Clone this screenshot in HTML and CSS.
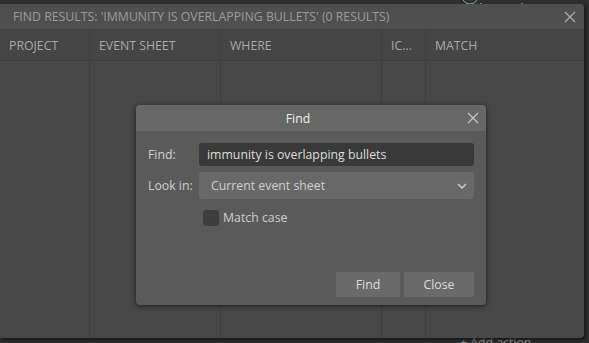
FILE: index.html
```html
<!DOCTYPE html>
<html lang="en">
<head>
    <meta charset="UTF-8">
    <title>Find results</title>
    <link rel="stylesheet" href="styles.css">
</head>
<body>

    <div class="backdrop">
        <svg class="bg-bits" width="120" height="6" viewBox="0 0 120 6">
            <circle cx="10" cy="-4" r="8" fill="none" stroke="#8fa88f" stroke-width="1"/>
            <rect x="20" y="3" width="2" height="2" fill="#2b9bc0"/>
            <rect x="61" y="3" width="2" height="2" fill="#2b9bc0"/>
        </svg>
        <div class="add-action">+ Add action</div>
    </div>

    <div class="results">
        <div class="results-title">
            <span>FIND RESULTS: 'IMMUNITY IS OVERLAPPING BULLETS' (0 RESULTS)</span>
            <svg class="close-x" width="12" height="12" viewBox="0 0 12 12"><path d="M1 1 L11 11 M11 1 L1 11" stroke="#a8a8a8" stroke-width="1.4"/></svg>
        </div>
        <div class="grid">
            <div class="col"><div class="head">PROJECT</div></div>
            <div class="col"><div class="head">EVENT SHEET</div></div>
            <div class="col"><div class="head">WHERE</div></div>
            <div class="col"><div class="head">IC...</div></div>
            <div class="col"><div class="head">MATCH</div></div>
        </div>
    </div>

    <div class="dialog">
        <div class="dialog-title">
            <span>Find</span>
            <svg class="dialog-x" width="12" height="12" viewBox="0 0 12 12"><path d="M1 1 L11 11 M11 1 L1 11" stroke="#c4c4c4" stroke-width="1.4"/></svg>
        </div>
        <div class="dialog-body">
            <div class="row">
                <label>Find:</label>
                <div class="input">immunity is overlapping bullets</div>
            </div>
            <div class="row">
                <label>Look in:</label>
                <div class="select">
                    <span>Current event sheet</span>
                    <svg width="10" height="6" viewBox="0 0 10 6"><path d="M1 1 L5 5 L9 1" fill="none" stroke="#cfcfcf" stroke-width="1.5"/></svg>
                </div>
            </div>
            <div class="check-row">
                <span class="box"></span>
                <span>Match case</span>
            </div>
            <div class="buttons">
                <button class="btn find">Find</button>
                <button class="btn close">Close</button>
            </div>
        </div>
    </div>

</body>
</html>
```

FILE: styles.css
```css
* { margin: 0; padding: 0; box-sizing: border-box; }

body {
    font-family: "Open Sans", "Noto Sans", sans-serif;
    font-size: 12.3px;
    width: 589px;
    height: 343px;
    background: #2e2e2e;
    overflow: hidden;
    position: relative;
    padding-top: 4px;
}

.backdrop .bg-bits {
    position: absolute;
    left: 460px;
    top: 0;
}

.add-action {
    position: absolute;
    left: 460px;
    top: 334px;
    color: #8a8a8a;
}

.results {
    position: relative;
    width: 584px;
    height: 334px;
    background: #474747;
    border-radius: 0 4px 4px 0;
    box-shadow: 2px 2px 3px rgba(0, 0, 0, 0.5);
    display: flex;
    flex-direction: column;
    overflow: hidden;
}

.results-title {
    height: 26px;
    background: #4f4f4f;
    display: flex;
    align-items: center;
    justify-content: space-between;
    padding: 0 8px 0 13px;
    color: #9c9c9c;
    border-bottom: 1px solid #414141;
}

.grid {
    flex: 1;
    display: grid;
    grid-template-columns: 90px 131px 161px 44px 1fr;
}

.col {
    border-right: 1px solid #3e3e3e;
}

.col:last-child { border-right: none; }

.head {
    height: 31px;
    display: flex;
    align-items: center;
    padding: 1px 0 0 9px;
    color: #a9a9a9;
    background: #454545;
    border-bottom: 1px solid #3d3d3d;
}

.dialog {
    position: absolute;
    left: 136px;
    top: 105px;
    width: 350px;
    height: 200px;
    background: #5a5a5a;
    border-radius: 4px;
    box-shadow: 0 1px 5px rgba(0, 0, 0, 0.6);
    overflow: hidden;
}

.dialog-title {
    height: 26px;
    background: #676767;
    display: flex;
    align-items: center;
    justify-content: center;
    padding-right: 26px;
    position: relative;
    color: #f0f0f0;
}

.dialog-x {
    position: absolute;
    right: 7px;
    top: 7px;
}

.dialog-body {
    padding: 12px 12px 8px 12px;
    display: flex;
    flex-direction: column;
    height: 174px;
}

.row {
    display: flex;
    align-items: center;
    margin-bottom: 6px;
}

.row label {
    width: 51px;
    color: #cfcfcf;
}

.input {
    flex: 1;
    height: 23px;
    background: #393939;
    border-radius: 3px;
    padding-left: 8px;
    color: #dedede;
    display: flex;
    align-items: center;
}

.select {
    flex: 1;
    height: 27px;
    background: #686868;
    border-radius: 3px;
    padding: 0 7px 0 12px;
    color: #d0d0d0;
    display: flex;
    align-items: center;
    justify-content: space-between;
}

.check-row {
    display: flex;
    align-items: center;
    gap: 4px;
    margin-left: 55px;
    margin-top: 4px;
    color: #cfcfcf;
}

.box {
    width: 16px;
    height: 16px;
    background: #3e3e3e;
    border-radius: 3px;
}

.buttons {
    margin-top: auto;
    display: flex;
    justify-content: flex-end;
    gap: 4px;
}

.btn {
    height: 25px;
    border: none;
    border-radius: 2px;
    background: #6a6a6a;
    color: #dedede;
    font-family: inherit;
    font-size: inherit;
}

.btn.find { width: 64px; }
.btn.close { width: 70px; }
```
